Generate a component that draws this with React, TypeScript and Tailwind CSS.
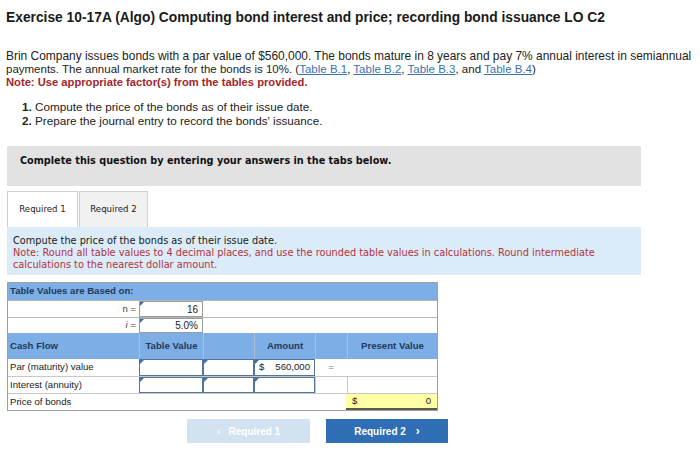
import React from "react";

const sans = { fontFamily: '"Liberation Sans", Arial, sans-serif' };
const verdana = { fontFamily: '"DejaVu Sans", Verdana, sans-serif' };

function Flag() {
  return <span className="absolute left-0 top-0 h-0 w-0 border-l-[4px] border-b-[4px] border-l-[#3a6fb0] border-b-transparent" />;
}

function InputCell({ w, children, grey }: { w: string; children?: React.ReactNode; grey?: boolean }) {
  return (
    <div
      className={`relative flex h-full items-center justify-between border px-1 ${w} ${grey ? "border-[#9a9a9a]" : "border-[#54749a]"}`}
    >
      <Flag />
      {children}
    </div>
  );
}

export default function App() {
  const cols = ["w-[131px]", "w-[64px]", "w-[51px]", "w-[61px]", "w-[32px]", "w-[91px]"];
  return (
    <div className="min-h-[468px] w-[700px] bg-white text-[#222]" style={sans}>
      <h1 className="ml-[6px] pt-[8px] text-[13.8px] font-bold leading-[20px] text-[#1a1a1a]">
        Exercise 10-17A (Algo) Computing bond interest and price; recording bond issuance LO C2
      </h1>

      <p className="ml-[6px] mt-[22px] text-[11.95px] leading-[13px]">
        Brin Company issues bonds with a par value of $560,000. The bonds mature in 8 years and pay 7% annual interest in semiannual
        <br />
        <span className="text-[11.5px]">
          payments. The annual market rate for the bonds is 10%. (
          <span className="text-[#3a72b0] underline">Table B.1</span>, <span className="text-[#3a72b0] underline">Table B.2</span>,{" "}
          <span className="text-[#3a72b0] underline">Table B.3</span>, and <span className="text-[#3a72b0] underline">Table B.4</span>)
        </span>
        <br />
        <span className="text-[11.2px] font-bold text-[#a3262b]">Note: Use appropriate factor(s) from the tables provided.</span>
      </p>

      <ol className="ml-[22px] mt-[11px] text-[11.7px] leading-[14px]">
        <li>
          <b>1.</b> Compute the price of the bonds as of their issue date.
        </li>
        <li>
          <b>2.</b> Prepare the journal entry to record the bonds' issuance.
        </li>
      </ol>

      <div className="ml-[7px] mt-[18px] h-[40px] w-[634px] bg-[#e2e2e2] pl-[13px] pt-[9px]" style={verdana}>
        <div className="text-[9.7px] font-bold leading-[12px] text-[#111]">Complete this question by entering your answers in the tabs below.</div>
      </div>

      <div className="ml-[7px] mt-[5px] flex h-[36px] text-[8.6px] text-[#222]" style={verdana}>
        <div className="flex w-[71px] items-center justify-center border border-b-0 border-[#cfcfcf] bg-white">Required 1</div>
        <div className="ml-[1px] flex w-[69px] items-center justify-center border border-b-0 border-[#cfcfcf] bg-[#f1f1f1]">Required 2</div>
      </div>

      <div className="ml-[7px] h-[48px] w-[634px] bg-[#dcebf8] pl-[6px] pt-[8px] text-[9.75px] leading-[12px]" style={verdana}>
        <div className="text-[#1a1a1a]">Compute the price of the bonds as of their issue date.</div>
        <div className="text-[#b0343c]">
          Note: Round all table values to 4 decimal places, and use the rounded table values in calculations. Round intermediate
          <br />
          calculations to the nearest dollar amount.
        </div>
      </div>

      <div className="ml-[7px] mt-[7px] w-[431px] border border-[#a0a0a0] text-[9.6px] text-[#222]">
        <div className="flex h-[17px] items-center bg-[#7eaee6] pl-[2px] font-bold text-[#1f3a5c]">Table Values are Based on:</div>
        <div className="flex h-[17px] border-t border-[#b5b5b5]">
          <div className={`${cols[0]} flex items-center justify-end pr-[3px] text-[#444]`}>n =</div>
          <InputCell w={cols[1]} grey>
            <span />
            <span className="text-[10px]">16</span>
          </InputCell>
          <div className="flex-1" />
        </div>
        <div className="flex h-[16px] border-t border-[#b5b5b5]">
          <div className={`${cols[0]} flex items-center justify-end pr-[3px] text-[#444]`}>
            <i>i</i>&nbsp;=
          </div>
          <InputCell w={cols[1]} grey>
            <span />
            <span className="text-[10px]">5.0%</span>
          </InputCell>
          <div className="flex-1" />
        </div>
        <div className="flex h-[26px] bg-[#7eaee6] font-bold text-[#1f3a5c]">
          <div className={`${cols[0]} flex items-center pl-[2px]`}>Cash Flow</div>
          <div className={`${cols[1]} flex items-center justify-center border-l border-[#a9c0db]`}>Table Value</div>
          <div className={`${cols[2]} border-l border-[#a9c0db]`} />
          <div className={`${cols[3]} flex items-center justify-center border-l border-[#a9c0db]`}>Amount</div>
          <div className={`${cols[4]} border-l border-[#a9c0db]`} />
          <div className={`flex-1 flex items-center justify-center border-l border-[#a9c0db]`}>Present Value</div>
        </div>
        <div className="flex h-[17px]">
          <div className={`${cols[0]} flex items-center pl-[2px]`}>Par (maturity) value</div>
          <InputCell w={cols[1]} />
          <InputCell w={cols[2]} />
          <InputCell w={cols[3]}>
            <span>$</span>
            <span>560,000</span>
          </InputCell>
          <div className={`${cols[4]} flex items-center justify-center text-[#777]`}>=</div>
          <div className="flex-1" />
        </div>
        <div className="flex h-[17px] border-t border-[#c8c8c8]">
          <div className={`${cols[0]} flex items-center pl-[2px]`}>Interest (annuity)</div>
          <InputCell w={cols[1]} />
          <InputCell w={cols[2]} />
          <InputCell w={cols[3]} />
          <div className={`${cols[4]} border-l border-[#c8c8c8]`} />
          <div className="flex-1 border-l border-[#c8c8c8]" />
        </div>
        <div className="flex h-[17px] border-t border-[#c8c8c8]">
          <div className="flex flex-1 items-center pl-[2px]">Price of bonds</div>
          <div className="flex w-[91px] items-center justify-between border-b-2 border-[#5a5a4a] bg-[#ffffa6] px-[6px]">
            <span>$</span>
            <span>0</span>
          </div>
        </div>
      </div>

      <div className="mt-[8px] flex text-[10px] font-bold text-white">
        <div className="ml-[187px] flex h-[24px] w-[123px] items-center justify-center gap-[8px] bg-[#d2e2f0]">
          <span className="text-[11px]">‹</span>
          <span>Required 1</span>
        </div>
        <div className="ml-[16px] flex h-[24px] w-[122px] items-center justify-center gap-[10px] bg-[#2f6db5]">
          <span>Required 2</span>
          <span className="text-[12px]">›</span>
        </div>
      </div>
    </div>
  );
}
